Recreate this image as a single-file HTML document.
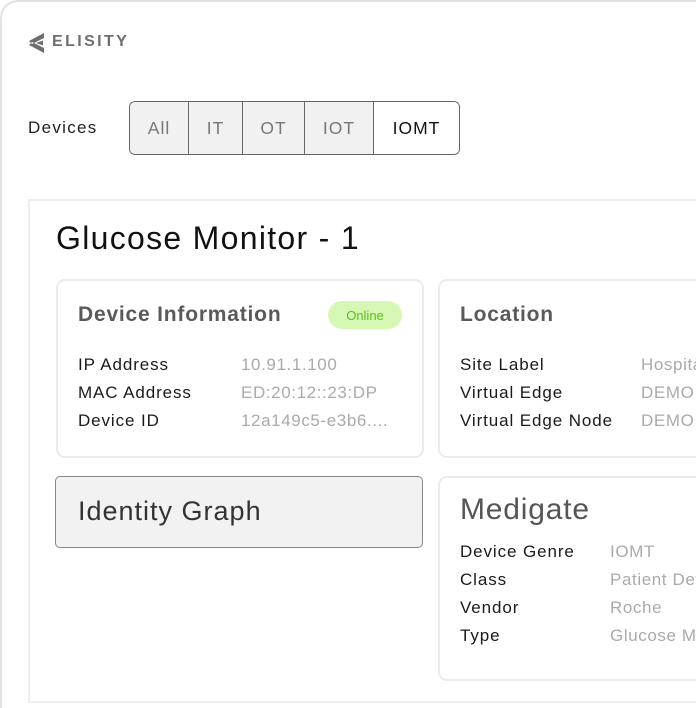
<!DOCTYPE html>
<html><head><meta charset="utf-8"><style>
*{box-sizing:border-box;margin:0;padding:0}
html,body{width:696px;height:708px;overflow:hidden}
body{background:#fff;font-family:"Liberation Sans",sans-serif;position:relative}
.frame{position:absolute;left:0;top:0;width:696px;height:708px;border:2px solid #e2e2e2;border-right:none;border-bottom:none;border-top-left-radius:18px}
.abs{position:absolute}
.logo{left:28px;top:32px}
.logotext{left:52px;top:33px;font-weight:bold;font-size:16px;letter-spacing:2.4px;color:#6e6e6e}
.dev{left:28px;top:118px;font-size:17px;color:#222;letter-spacing:1.3px}
.seg{left:129px;top:101px;height:54px;width:331px;border:1.5px solid #666;border-radius:6px;display:flex;overflow:hidden}
.seg div{display:flex;align-items:center;justify-content:center;font-size:17.5px;color:#777;background:#f1f1f1;border-right:1.5px solid #666;letter-spacing:1px}
.seg div:last-child{border-right:none;background:#fff;color:#111}
.panel{left:28px;top:199px;width:668px;height:504px;border:2px solid #eeeeee;border-right:none}
.title{left:56px;top:220px;font-size:32px;color:#111;letter-spacing:1.3px}
.card{border:2px solid #ececec;border-radius:9px;background:#fff}
.cr{border-right:none;border-top-right-radius:0;border-bottom-right-radius:0}
.h{font-weight:bold;font-size:21px;color:#5a5a5a;letter-spacing:.8px}
.row{font-size:17px;line-height:28px;color:#1a1a1a;white-space:nowrap;letter-spacing:.9px}
.v{color:#aaa;letter-spacing:.6px;overflow:hidden}
.badge{left:328px;top:301px;width:74px;height:28px;border-radius:14px;background:#d5f8b4;color:#58c21a;font-size:13px;display:flex;align-items:center;justify-content:center}
</style></head><body>
<div class="frame"></div>
<svg class="abs logo" width="17" height="22" viewBox="0 0 17 22"><path d="M16 1 L1 9 L4 12 L16 6Z M16 21 L1 13 L4 10 L16 16Z M8 11 L15 8.5 L15 13.5Z" fill="#6e6e6e"/></svg>
<div class="abs logotext">ELISITY</div>
<div class="abs dev">Devices</div>
<div class="abs seg"><div style="width:59px">All</div><div style="width:54px">IT</div><div style="width:62px">OT</div><div style="width:69px">IOT</div><div style="flex:1">IOMT</div></div>
<div class="abs panel"></div>
<div class="abs title">Glucose Monitor - 1</div>

<div class="abs card" style="left:56px;top:279px;width:368px;height:179px"></div>
<div class="abs h" style="left:78px;top:303px">Device Information</div>
<div class="abs badge">Online</div>
<div class="abs row" style="left:78px;top:351px">IP Address<br>MAC Address<br>Device ID</div>
<div class="abs row v" style="left:241px;top:351px;width:170px">10.91.1.100<br>ED:20:12::23:DP<br>12a149c5-e3b6....</div>

<div class="abs card cr" style="left:438px;top:279px;width:258px;height:179px"></div>
<div class="abs h" style="left:460px;top:303px">Location</div>
<div class="abs row" style="left:460px;top:351px">Site Label<br>Virtual Edge<br>Virtual Edge Node</div>
<div class="abs row v" style="left:641px;top:351px;width:55px">Hospital<br>DEMO<br>DEMO</div>

<div class="abs" style="left:55px;top:476px;width:368px;height:72px;border:1.5px solid #888;border-radius:5px;background:#f2f2f2"></div>
<div class="abs" style="left:78px;top:496px;font-size:27px;color:#333;letter-spacing:1px">Identity Graph</div>

<div class="abs card cr" style="left:438px;top:476px;width:258px;height:205px"></div>
<div class="abs" style="left:460px;top:493px;font-size:30px;color:#555;letter-spacing:.8px">Medigate</div>
<div class="abs row" style="left:460px;top:538px">Device Genre<br>Class<br>Vendor<br>Type</div>
<div class="abs row v" style="left:610px;top:538px;width:86px">IOMT<br>Patient Devices<br>Roche<br>Glucose Monitor</div>
</body></html>
